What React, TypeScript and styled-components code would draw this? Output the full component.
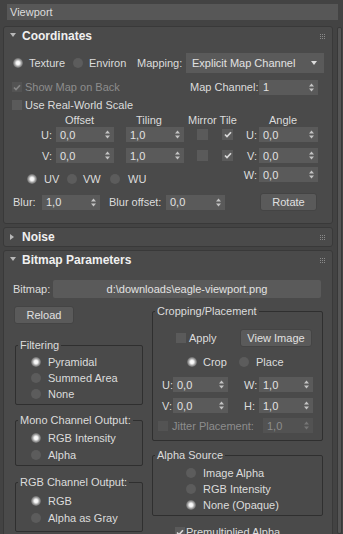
import styled, { createGlobalStyle } from "styled-components";

const COLOR = {
  page: "#434343",
  panel: "#4a4a4a",
  panelLine: "#393939",
  field: "#5a5a5a",
  text: "#dcdcdc",
  bright: "#f0f0f0",
  dim: "#8d8d8d",
  groupLine: "#2f2f2f",
  glyph: "#c4c4c4",
};

const GlobalStyle = createGlobalStyle`
  body {
    margin: 0;
    background: ${COLOR.page};
  }
`;

const Screen = styled.div`
  width: 343px;
  height: 534px;
  overflow: hidden;
  background: ${COLOR.page};
  font-family: "Liberation Sans", Arial, sans-serif;
  font-size: 11px;
  color: ${COLOR.text};
  display: flex;
  flex-direction: column;
`;

const TopBar = styled.div`
  padding: 4px 5px 0 7px;
`;

const NameField = styled.div`
  height: 16px;
  line-height: 16px;
  padding-left: 3px;
  background: #575757;
`;

const Workspace = styled.div`
  display: flex;
  margin-top: 6px;
  flex: 1;
  min-height: 0;
`;

const Panels = styled.div`
  width: 330px;
  margin-left: 3px;
  display: flex;
  flex-direction: column;
  gap: 3px;
`;

const ScrollTrack = styled.div`
  width: 3px;
  margin: 1px 0 0 4px;
  background: #555555;
  border: 1px solid #383838;
  border-radius: 2px;
`;

const Panel = styled.section`
  flex-shrink: 0;
  background: ${COLOR.panel};
  border: 1px solid ${COLOR.panelLine};
  border-radius: 3px;
`;

const PanelHead = styled.div`
  height: 18px;
  display: flex;
  align-items: center;
  padding: 0 7px 0 6px;
  font-size: 12px;
  font-weight: bold;
  color: ${COLOR.bright};
`;

const CaretBox = styled.span<{ $lift?: boolean }>`
  width: 6px;
  display: flex;
  margin-bottom: ${(p) => (p.$lift ? 3 : 0)}px;
`;

const HeadTitle = styled.span`
  margin-left: 6px;
  flex: 1;
`;

const PanelBody = styled.div<{ $pt: number; $pb: number }>`
  padding: ${(p) => p.$pt}px 0 ${(p) => p.$pb}px;
`;

const Row = styled.div<{ $h: number; $mt?: number }>`
  display: flex;
  align-items: center;
  height: ${(p) => p.$h}px;
  margin-top: ${(p) => p.$mt ?? 0}px;
`;

const Label = styled.span<{ $w?: number; $ml?: number; $dim?: boolean; $right?: boolean }>`
  flex-shrink: 0;
  white-space: nowrap;
  margin-left: ${(p) => p.$ml ?? 0}px;
  width: ${(p) => (p.$w ? `${p.$w}px` : "auto")};
  text-align: ${(p) => (p.$right ? "right" : "left")};
  color: ${(p) => (p.$dim ? COLOR.dim : COLOR.text)};
`;

const SpinBox = styled.div<{ $w: number; $ml?: number; $disabled?: boolean }>`
  flex-shrink: 0;
  box-sizing: border-box;
  width: ${(p) => p.$w}px;
  height: 15px;
  margin-left: ${(p) => p.$ml ?? 0}px;
  padding: 0 4px;
  display: flex;
  align-items: center;
  justify-content: space-between;
  background: ${(p) => (p.$disabled ? "#525252" : COLOR.field)};
  color: ${(p) => (p.$disabled ? COLOR.dim : "#e2e2e2")};
`;

const Dropdown = styled.div`
  flex-shrink: 0;
  box-sizing: border-box;
  width: 138px;
  height: 20px;
  padding: 0 7px 0 6px;
  display: flex;
  align-items: center;
  justify-content: space-between;
  background: ${COLOR.field};
  color: #e2e2e2;
`;

const PathField = styled.div`
  flex-shrink: 0;
  width: 268px;
  height: 18px;
  line-height: 18px;
  text-align: center;
  background: ${COLOR.field};
  border-radius: 2px;
  color: #e2e2e2;
`;

const Button = styled.div<{ $w: number; $ml?: number }>`
  flex-shrink: 0;
  box-sizing: border-box;
  width: ${(p) => p.$w}px;
  height: 18px;
  margin-left: ${(p) => p.$ml ?? 0}px;
  display: flex;
  align-items: center;
  justify-content: center;
  background: #5a5a5a;
  border: 1px solid #444444;
  border-radius: 3px;
  color: #e0e0e0;
`;

const RadioDot = styled.span<{ $on?: boolean; $ml?: number }>`
  flex-shrink: 0;
  width: 10px;
  height: 10px;
  border-radius: 50%;
  margin-left: ${(p) => p.$ml ?? 0}px;
  background: ${(p) =>
    p.$on
      ? "radial-gradient(circle, #ffffff 0, #f2f2f2 1.8px, #a8a8a8 3.3px, #646464 5px)"
      : "#5c5c5c"};
`;

const CheckBox = styled.span<{ $ml?: number; $size: number; $disabled?: boolean }>`
  flex-shrink: 0;
  width: ${(p) => p.$size}px;
  height: ${(p) => p.$size}px;
  margin-left: ${(p) => p.$ml ?? 0}px;
  display: flex;
  align-items: center;
  justify-content: center;
  background: ${(p) => (p.$disabled ? "#535353" : "#5a5a5a")};
`;

const Table = styled.div`
  display: flex;
  align-items: flex-start;
`;

const TableCol = styled.div<{ $w: number }>`
  width: ${(p) => p.$w}px;
  flex-shrink: 0;
  display: flex;
  flex-direction: column;
`;

const Columns = styled.div`
  display: flex;
  align-items: flex-start;
`;

const Column = styled.div<{ $w: number; $ml: number }>`
  width: ${(p) => p.$w}px;
  margin-left: ${(p) => p.$ml}px;
  flex-shrink: 0;
  display: flex;
  flex-direction: column;
`;

const Group = styled.fieldset<{ $mt: number; $ml?: number; $w: number; $pt: number; $pb: number }>`
  box-sizing: border-box;
  width: ${(p) => p.$w}px;
  min-inline-size: 0;
  margin: ${(p) => p.$mt}px 0 0 ${(p) => p.$ml ?? 0}px;
  padding: ${(p) => p.$pt}px 0 ${(p) => p.$pb}px;
  border: 1px solid ${COLOR.groupLine};
  border-radius: 2px;
`;

const GroupTitle = styled.legend`
  margin-left: 2px;
  padding: 0 2px;
  line-height: 13px;
  font-size: 11px;
  color: ${COLOR.text};
`;

const Arrows = ({ dim }: { dim?: boolean }) => (
  <svg width="5" height="9" viewBox="0 0 5 9">
    <polygon points="0,3.5 2.5,0.5 5,3.5" fill={dim ? "#767676" : COLOR.glyph} />
    <polygon points="0,5.5 2.5,8.5 5,5.5" fill={dim ? "#767676" : COLOR.glyph} />
  </svg>
);

const Spinner = ({ value, w, ml, disabled }: { value: string; w: number; ml?: number; disabled?: boolean }) => (
  <SpinBox $w={w} $ml={ml} $disabled={disabled}>
    <span>{value}</span>
    <Arrows dim={disabled} />
  </SpinBox>
);

const Radio = ({ on, ml }: { on?: boolean; ml?: number }) => <RadioDot $on={on} $ml={ml} />;

const Check = ({ on, ml, size = 10, disabled }: { on?: boolean; ml?: number; size?: number; disabled?: boolean }) => (
  <CheckBox $ml={ml} $size={size} $disabled={disabled}>
    {on && (
      <svg width="8" height="7" viewBox="0 0 8 7">
        <polyline
          points="1,3.5 3,5.6 7,1.2"
          fill="none"
          stroke={disabled ? "#858585" : "#d8d8d8"}
          strokeWidth="1.7"
        />
      </svg>
    )}
  </CheckBox>
);

const Grip = () => (
  <svg width="5" height="5" viewBox="0 0 5 5">
    {[0, 2, 4].flatMap((y) =>
      [0, 2, 4].map((x) => <rect key={`${x}-${y}`} x={x} y={y} width="1" height="1" fill="#8a8a8a" />)
    )}
  </svg>
);

const Header = ({ title, open }: { title: string; open?: boolean }) => (
  <PanelHead>
    <CaretBox $lift={open}>
      {open ? (
        <svg width="6" height="4" viewBox="0 0 6 4">
          <polygon points="0,0 6,0 3,4" fill="#b8b8b8" />
        </svg>
      ) : (
        <svg width="4" height="6" viewBox="0 0 4 6">
          <polygon points="0,0 4,3 0,6" fill="#b8b8b8" />
        </svg>
      )}
    </CaretBox>
    <HeadTitle>{title}</HeadTitle>
    <Grip />
  </PanelHead>
);

const OptionRow = ({ h, label, on, ml, gap }: { h: number; label: string; on?: boolean; ml: number; gap: number }) => (
  <Row $h={h}>
    <Radio on={on} ml={ml} />
    <Label $ml={gap}>{label}</Label>
  </Row>
);

const Coordinates = () => (
  <Panel>
    <Header title="Coordinates" open />
    <PanelBody $pt={8} $pb={12}>
      <Row $h={20}>
        <Radio on ml={9} />
        <Label $ml={6} $w={38}>Texture</Label>
        <Radio ml={6} />
        <Label $ml={6} $w={42}>Environ</Label>
        <Label $ml={6} $w={49}>Mapping:</Label>
        <Dropdown>
          <span>Explicit Map Channel</span>
          <svg width="6" height="4" viewBox="0 0 6 4">
            <polygon points="0,0 6,0 3,4" fill="#dcdcdc" />
          </svg>
        </Dropdown>
      </Row>
      <Row $h={18} $mt={5}>
        <Check on disabled ml={8} />
        <Label $ml={3} $w={165} $dim>Show Map on Back</Label>
        <Label $w={69}>Map Channel:</Label>
        <Spinner w={59} value="1" />
      </Row>
      <Row $h={17}>
        <Check ml={8} />
        <Label $ml={3}>Use Real-World Scale</Label>
      </Row>
      <Table>
        <TableCol $w={229}>
          <Row $h={14}>
            <Label $ml={61} $w={71}>Offset</Label>
            <Label $w={52}>Tiling</Label>
            <Label>Mirror Tile</Label>
          </Row>
          {["U:", "V:"].map((axis, i) => (
            <Row key={axis} $h={15} $mt={i ? 6 : 0}>
              <Label $w={48} $right>{axis}</Label>
              <Spinner w={58} ml={4} value="0,0" />
              <Spinner w={58} ml={12} value="1,0" />
              <Check size={11} ml={13} />
              <Check size={11} on ml={14} />
            </Row>
          ))}
          <Row $h={15} $mt={8}>
            <Radio on ml={23} />
            <Label $ml={7} $w={23}>UV</Label>
            <Radio />
            <Label $ml={6} $w={27}>VW</Label>
            <Radio />
            <Label $ml={8}>WU</Label>
          </Row>
        </TableCol>
        <TableCol $w={85}>
          <Row $h={14}>
            <Label $ml={36}>Angle</Label>
          </Row>
          {["U:", "V:", "W:"].map((axis, i) => (
            <Row key={axis} $h={15} $mt={i === 0 ? 0 : i === 1 ? 6 : 4}>
              <Label $w={24} $right>{axis}</Label>
              <Spinner w={59} ml={2} value="0,0" />
            </Row>
          ))}
        </TableCol>
      </Table>
      <Row $h={18} $mt={7}>
        <Label $ml={9} $w={29}>Blur:</Label>
        <Spinner w={58} value="1,0" />
        <Label $ml={9} $w={57}>Blur offset:</Label>
        <Spinner w={59} value="0,0" />
        <Button $w={57} $ml={35}>Rotate</Button>
      </Row>
    </PanelBody>
  </Panel>
);

const BitmapParameters = () => (
  <Panel>
    <Header title="Bitmap Parameters" open />
    <PanelBody $pt={11} $pb={20}>
      <Row $h={18}>
        <Label $ml={9} $w={40}>Bitmap:</Label>
        <PathField>d:\downloads\eagle-viewport.png</PathField>
      </Row>
      <Columns>
        <Column $w={129} $ml={10}>
          <Row $h={18} $mt={8}>
            <Button $w={60}>Reload</Button>
          </Row>
          <Group $mt={15} $ml={1} $w={128} $pt={2} $pb={2}>
            <GroupTitle>Filtering</GroupTitle>
            <OptionRow h={16} ml={15} gap={7} on label="Pyramidal" />
            <OptionRow h={16} ml={15} gap={7} label="Summed Area" />
            <OptionRow h={16} ml={15} gap={7} label="None" />
          </Group>
          <Group $mt={9} $ml={1} $w={128} $pt={2} $pb={2}>
            <GroupTitle>Mono Channel Output:</GroupTitle>
            <OptionRow h={17} ml={15} gap={7} on label="RGB Intensity" />
            <OptionRow h={17} ml={15} gap={7} label="Alpha" />
          </Group>
          <Group $mt={10} $ml={1} $w={128} $pt={3} $pb={5}>
            <GroupTitle>RGB Channel Output:</GroupTitle>
            <OptionRow h={17} ml={15} gap={7} on label="RGB" />
            <OptionRow h={17} ml={15} gap={7} label="Alpha as Gray" />
          </Group>
        </Column>
        <Column $w={171} $ml={9}>
          <Group $mt={7} $w={171} $pt={11} $pb={7}>
            <GroupTitle>Cropping/Placement</GroupTitle>
            <Row $h={18}>
              <Check ml={23} />
              <Label $ml={3} $w={51}>Apply</Label>
              <Button $w={72}>View Image</Button>
            </Row>
            <Row $h={16} $mt={7}>
              <Radio on ml={34} />
              <Label $ml={6} $w={36}>Crop</Label>
              <Radio />
              <Label $ml={7}>Place</Label>
            </Row>
            <Row $h={15} $mt={7}>
              <Label $ml={9} $w={11}>U:</Label>
              <Spinner w={55} value="0,0" />
              <Label $ml={16} $w={15}>W:</Label>
              <Spinner w={54} value="1,0" />
            </Row>
            <Row $h={15} $mt={6}>
              <Label $ml={9} $w={11}>V:</Label>
              <Spinner w={55} value="0,0" />
              <Label $ml={16} $w={15}>H:</Label>
              <Spinner w={54} value="1,0" />
            </Row>
            <Row $h={15} $mt={5}>
              <Check disabled ml={5} />
              <Label $ml={4} $w={91} $dim>Jitter Placement:</Label>
              <Spinner w={50} value="1,0" disabled />
            </Row>
          </Group>
          <Group $mt={8} $w={171} $pt={3} $pb={2}>
            <GroupTitle>Alpha Source</GroupTitle>
            <OptionRow h={16} ml={33} gap={7} label="Image Alpha" />
            <OptionRow h={16} ml={33} gap={7} label="RGB Intensity" />
            <OptionRow h={16} ml={33} gap={7} on label="None (Opaque)" />
          </Group>
          <Row $h={16} $mt={8}>
            <Check on ml={23} />
            <Label $ml={1}>Premultiplied Alpha</Label>
          </Row>
        </Column>
      </Columns>
    </PanelBody>
  </Panel>
);

const App = () => (
  <>
    <GlobalStyle />
    <Screen>
      <TopBar>
        <NameField>Viewport</NameField>
      </TopBar>
      <Workspace>
        <Panels>
          <Coordinates />
          <Panel>
            <Header title="Noise" />
          </Panel>
          <BitmapParameters />
        </Panels>
        <ScrollTrack />
      </Workspace>
    </Screen>
  </>
);

export default App;
